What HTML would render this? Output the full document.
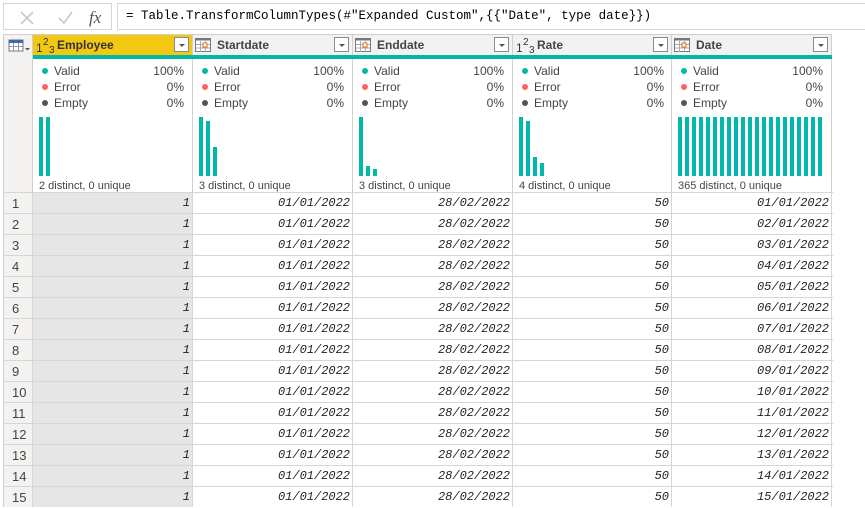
<!DOCTYPE html>
<html><head><style>
*{margin:0;padding:0;box-sizing:border-box}
body{width:865px;height:506px;overflow:hidden;background:#fff;font-family:"Liberation Sans",sans-serif;position:relative}
.a{position:absolute}
.fb{left:3px;top:3px;width:109px;height:27px;border:1px solid #d6d6d6;background:#fff}
.fx{left:117px;top:3px;width:760px;height:27px;border:1px solid #d6d6d6;background:#fff;font:12.5px "Liberation Mono",monospace;line-height:25px;padding-left:8px;color:#000}
.hd{top:34px;height:21px;background:#f3f2f1;border-top:1px solid #d0d0d0;border-right:1px solid #d0d0d0;font-size:12px;color:#333;line-height:20px}
.hd b{font-weight:bold;position:absolute;left:24px;top:0}
.num{position:absolute;left:2px;top:0;width:22px;height:20px;font-size:12px;color:#333}
.num span{position:absolute}
.dd{position:absolute;right:3px;top:2px;width:15px;height:15px;border:1px solid #8a8a8a;background:#fff}
.dd:after{content:"";position:absolute;left:4px;top:6px;border-left:3px solid transparent;border-right:3px solid transparent;border-top:3px solid #555}
.teal{top:55px;height:4px;background:#01b8aa}
.pr{top:59px;height:134px;border-right:1px solid #d0d0d0;font-size:12px;color:#444}
.st{position:absolute;left:6px;height:16px;width:145px}
.st i{display:inline-block;width:6px;height:6px;border-radius:50%;margin:0 6px 1px 3px}
.st span{position:absolute;right:0}
.bar{position:absolute;width:4px;background:#01b8aa;bottom:17px}
.dist{position:absolute;left:6px;bottom:1px;font-size:11px;color:#444}
.rn{left:3px;width:30px;background:#f3f2f1;border-right:1px solid #d0d0d0;border-left:1px solid #d0d0d0}
.row{position:absolute;left:3px;width:830px;height:21px;border-top:1px solid #d6d6d6}
.row div{position:absolute;top:0;height:20px;font:italic 12px "Liberation Mono",monospace;line-height:20px;color:#222;text-align:right;padding-right:2px;border-right:1px solid #d6d6d6}
.row .n{left:0;width:30px;font:13px "Liberation Sans",sans-serif;line-height:21px;text-align:left;padding-left:8px;color:#444;background:#f3f2f1;border-left:1px solid #d0d0d0}
</style></head><body>
<div class="a fb">
<svg width="109" height="27" style="position:absolute;left:0;top:0">
<path d="M17 8 L29 20 M29 8 L17 20" stroke="#c8c8c8" stroke-width="1.6"/>
<path d="M55 14 L60 19 L68 8" stroke="#c8c8c8" stroke-width="1.6" fill="none"/>
<text x="85" y="19" font-family="Liberation Serif" font-style="italic" font-size="17" fill="#555">fx</text>
</svg></div>
<div class="a fx">= Table.TransformColumnTypes(#"Expanded Custom",{{"Date", type date}})</div>

<div class="a hd" style="left:3px;width:30px;border-left:1px solid #d0d0d0">
<svg width="30" height="20"><rect x="5" y="5" width="14" height="11" fill="#fff" stroke="#777"/><rect x="5" y="5" width="14" height="3" fill="#3a6ab0"/><path d="M5 11.5H19M9.5 8V16M14.5 8V16" stroke="#999"/><path d="M21 13l2.5 2.5 2.5-2.5z" fill="#555"/></svg></div>

<div class="a hd" style="left:33px;width:160px;background:#f2c811"><div class="num"><span style="left:1px;top:3px">1</span><span style="left:8px;top:-2px;font-size:10px">2</span><span style="left:14px;top:6px;font-size:10px">3</span></div><b>Employee</b><div class="dd"></div></div>
<div class="a hd" style="left:193px;width:160px"><svg class="a" style="left:2px;top:3px" width="16" height="14"><rect x="0.5" y="0.5" width="15" height="13" fill="#fff" stroke="#777"/><rect x="0.5" y="0.5" width="15" height="2" fill="#777"/><path d="M5.5 3V14M10.5 3V14M1 6.5H15M1 10H15" stroke="#aaa"/><rect x="8" y="5" width="4" height="4" fill="#fff" stroke="#e07020"/></svg><b style="color:#444">Startdate</b><div class="dd"></div></div>
<div class="a hd" style="left:353px;width:160px"><svg class="a" style="left:2px;top:3px" width="16" height="14"><rect x="0.5" y="0.5" width="15" height="13" fill="#fff" stroke="#777"/><rect x="0.5" y="0.5" width="15" height="2" fill="#777"/><path d="M5.5 3V14M10.5 3V14M1 6.5H15M1 10H15" stroke="#aaa"/><rect x="8" y="5" width="4" height="4" fill="#fff" stroke="#e07020"/></svg><b style="color:#444">Enddate</b><div class="dd"></div></div>
<div class="a hd" style="left:513px;width:159px"><div class="num"><span style="left:1px;top:3px">1</span><span style="left:8px;top:-2px;font-size:10px">2</span><span style="left:14px;top:6px;font-size:10px">3</span></div><b style="color:#444">Rate</b><div class="dd"></div></div>
<div class="a hd" style="left:672px;width:160px"><svg class="a" style="left:2px;top:3px" width="16" height="14"><rect x="0.5" y="0.5" width="15" height="13" fill="#fff" stroke="#777"/><rect x="0.5" y="0.5" width="15" height="2" fill="#777"/><path d="M5.5 3V14M10.5 3V14M1 6.5H15M1 10H15" stroke="#aaa"/><rect x="8" y="5" width="4" height="4" fill="#fff" stroke="#e07020"/></svg><b style="color:#444">Date</b><div class="dd"></div></div>

<div class="a teal" style="left:33px;width:799px"></div>
<div class="a rn" style="top:55px;height:138px"></div>

<div class="a pr" style="left:33px;width:160px" id="p1"></div>
<div class="a pr" style="left:193px;width:160px" id="p2"></div>
<div class="a pr" style="left:353px;width:160px" id="p3"></div>
<div class="a pr" style="left:513px;width:159px" id="p4"></div>
<div class="a pr" style="left:672px;width:160px" id="p5"></div>
<div id="rows"></div>
<script>
var d=[["2 distinct, 0 unique",[59,59]],["3 distinct, 0 unique",[59,55,29]],["3 distinct, 0 unique",[59,10,7]],["4 distinct, 0 unique",[59,55,19,13]],["365 distinct, 0 unique",Array(21).fill(59)]];
d.forEach(function(c,i){var p=document.getElementById("p"+(i+1));var h='<div class="st" style="top:5px"><i style="background:#01b8aa"></i>Valid<span>100%</span></div><div class="st" style="top:21px"><i style="background:#fd625e"></i>Error<span>0%</span></div><div class="st" style="top:37px"><i style="background:#555"></i>Empty<span>0%</span></div>';
c[1].forEach(function(v,j){h+='<div class="bar" style="left:'+(6+7*j)+'px;height:'+v+'px"></div>'});
h+='<div class="dist">'+c[0]+'</div>';p.innerHTML=h;});
var r="";for(var k=1;k<=15;k++){var dd=(k<10?"0":"")+k;r+='<div class="row" style="top:'+(192+21*(k-1))+'px"><div class="n">'+k+'</div><div style="left:30px;width:160px;background:#e6e6e6">1</div><div style="left:190px;width:160px">01/01/2022</div><div style="left:350px;width:160px">28/02/2022</div><div style="left:510px;width:159px">50</div><div style="left:669px;width:160px">'+dd+'/01/2022</div></div>';}
document.getElementById("rows").innerHTML=r;
</script>
</body></html>
